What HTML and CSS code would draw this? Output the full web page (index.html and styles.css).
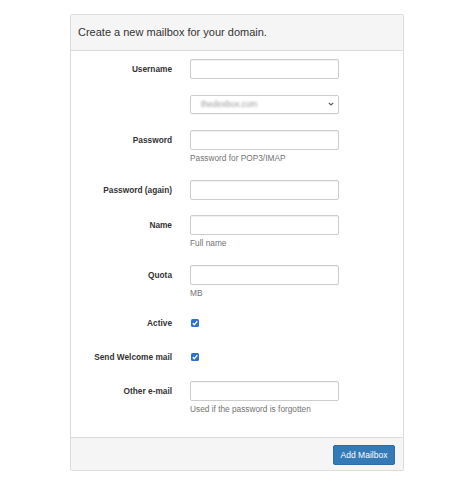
FILE: index.html
```html
<!DOCTYPE html>
<html lang="en">
<head>
<meta charset="utf-8">
<title>Create a new mailbox</title>
<link rel="stylesheet" href="styles.css">
</head>
<body>
<div class="panel">
  <div class="panel-heading">Create a new mailbox for your domain.</div>
  <form class="panel-body">
    <div class="row">
      <label class="lbl">Username</label>
      <div class="ctl"><div class="input"></div></div>
    </div>
    <div class="row">
      <span class="lbl"></span>
      <div class="ctl">
        <div class="select">
          <span class="blurred">thedexbox.com</span>
          <svg class="chev" width="6" height="4" viewBox="0 0 6 4"><path d="M0.8 0.8 L3 3 L5.2 0.8" fill="none" stroke="#555" stroke-width="1.1"/></svg>
        </div>
      </div>
    </div>
    <div class="row">
      <label class="lbl">Password</label>
      <div class="ctl"><div class="input"></div><div class="help">Password for POP3/IMAP</div></div>
    </div>
    <div class="row">
      <label class="lbl">Password (again)</label>
      <div class="ctl"><div class="input"></div></div>
    </div>
    <div class="row">
      <label class="lbl">Name</label>
      <div class="ctl"><div class="input"></div><div class="help">Full name</div></div>
    </div>
    <div class="row">
      <label class="lbl">Quota</label>
      <div class="ctl"><div class="input"></div><div class="help">MB</div></div>
    </div>
    <div class="row check-row">
      <label class="lbl">Active</label>
      <div class="ctl"><span class="checkbox"><svg width="8" height="8" viewBox="0 0 8 8"><path d="M1.8 4.2 L3.3 5.7 L6.3 2.3" fill="none" stroke="#fff" stroke-width="1.3"/></svg></span></div>
    </div>
    <div class="row check-row">
      <label class="lbl">Send Welcome mail</label>
      <div class="ctl"><span class="checkbox"><svg width="8" height="8" viewBox="0 0 8 8"><path d="M1.8 4.2 L3.3 5.7 L6.3 2.3" fill="none" stroke="#fff" stroke-width="1.3"/></svg></span></div>
    </div>
    <div class="row">
      <label class="lbl">Other e-mail</label>
      <div class="ctl"><div class="input"></div><div class="help">Used if the password is forgotten</div></div>
    </div>
  </form>
  <div class="panel-footer">
    <button class="btn" type="button">Add Mailbox</button>
  </div>
</div>
</body>
</html>
```

FILE: styles.css
```css
html, body {
  margin: 0;
  padding: 0;
  background: #fff;
}
body {
  font-family: "Liberation Sans", Arial, Helvetica, sans-serif;
  color: #333;
}
.panel {
  width: 334px;
  box-sizing: border-box;
  margin: 14px 0 0 70px;
  border: 1px solid #dcdcdc;
  border-radius: 2px;
  background: #fff;
  box-shadow: 0 1px 1px rgba(0,0,0,0.05);
}
.panel-heading {
  background: #f5f5f5;
  border-bottom: 1px solid #dcdcdc;
  padding: 11px 7px;
  font-size: 11px;
  line-height: 13px;
  color: #333;
}
.panel-body {
  display: flex;
  flex-direction: column;
  gap: 15.5px;
  padding: 8px 0 22px 0;
  margin: 0;
}
.row {
  display: grid;
  grid-template-columns: 101px 149px;
  column-gap: 18px;
  align-items: start;
}
.lbl {
  text-align: right;
  font-weight: bold;
  font-size: 8.3px;
  line-height: 20px;
  height: 20px;
  color: #333;
  white-space: nowrap;
}
.check-row .lbl {
  line-height: 18px;
  height: 18px;
}
.ctl {
  display: flex;
  flex-direction: column;
}
.input {
  height: 20px;
  box-sizing: border-box;
  border: 1px solid #ccc;
  border-radius: 2px;
  background: #fff;
  box-shadow: inset 0 1px 1px rgba(0,0,0,0.06);
}
.select {
  height: 19px;
  box-sizing: border-box;
  border: 1px solid #ccc;
  border-radius: 2px;
  background: #fff;
  display: flex;
  align-items: center;
  justify-content: space-between;
  padding: 0 4px 0 10px;
  box-shadow: 0 1px 1px rgba(0,0,0,0.04);
}
.blurred {
  font-size: 8.3px;
  color: #999;
  filter: blur(1.2px);
}
.chev {
  display: block;
}
.help {
  margin-top: 3px;
  font-size: 8.3px;
  line-height: 11px;
  color: #737373;
}
.check-row .ctl {
  height: 18px;
  justify-content: center;
}
.checkbox {
  display: flex;
  align-items: center;
  justify-content: center;
  width: 8px;
  height: 8px;
  margin-left: 1px;
  background: #2b72d6;
  border-radius: 1.5px;
}
.checkbox svg {
  display: block;
}
.panel-footer {
  background: #f5f5f5;
  border-top: 1px solid #dcdcdc;
  padding: 7px 8px 5px;
  display: flex;
  justify-content: flex-end;
}
.btn {
  width: 62px;
  height: 20px;
  box-sizing: border-box;
  background: #337ab7;
  border: 1px solid #2e6da4;
  border-radius: 2px;
  color: #fff;
  font-family: "Liberation Sans", Arial, Helvetica, sans-serif;
  font-size: 8.5px;
  padding: 0;
  line-height: 18px;
}
```
